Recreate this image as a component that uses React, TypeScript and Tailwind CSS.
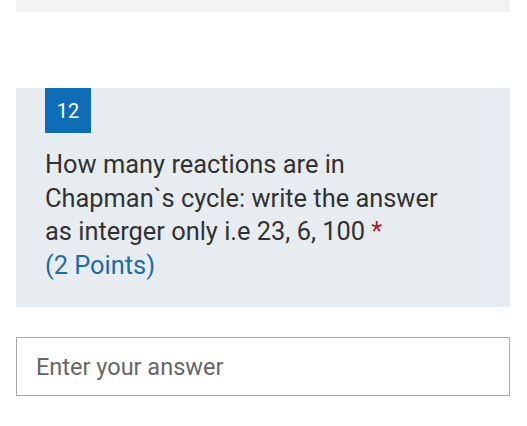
export default function App() {
  return (
    <div className="w-[527px] h-[426px] bg-white overflow-hidden" style={{ fontFamily: "Roboto, 'Liberation Sans', sans-serif" }}>
      <div className="mx-[16px] w-[494px] h-[12px] bg-[#f3f3f3]" />
      <div className="mx-[16px] mt-[76px] w-[494px] h-[219px] bg-[#e6ecf0] pl-[29px] pt-0">
        <div className="w-[46px] h-[45px] bg-[#0f6cb6] text-white text-[20px] flex items-center justify-center">12</div>
        <div className="mt-[15px] text-[25.4px] leading-[33.5px] text-[#323232] whitespace-nowrap">
          <div>How many reactions are in</div>
          <div>Chapman`s cycle: write the answer</div>
          <div>
            as interger only i.e 23, 6, 100 <span className="text-[#a4262c]">*</span>
          </div>
          <div className="text-[#1f6ba6]">(2 Points)</div>
        </div>
      </div>
      <div className="mx-[16px] mt-[30px] w-[494px] h-[59px] border border-[#aaaaaa] bg-white flex items-center pl-[19px] pt-[3px]">
        <span className="text-[23.5px] text-[#666666]">Enter your answer</span>
      </div>
    </div>
  );
}
